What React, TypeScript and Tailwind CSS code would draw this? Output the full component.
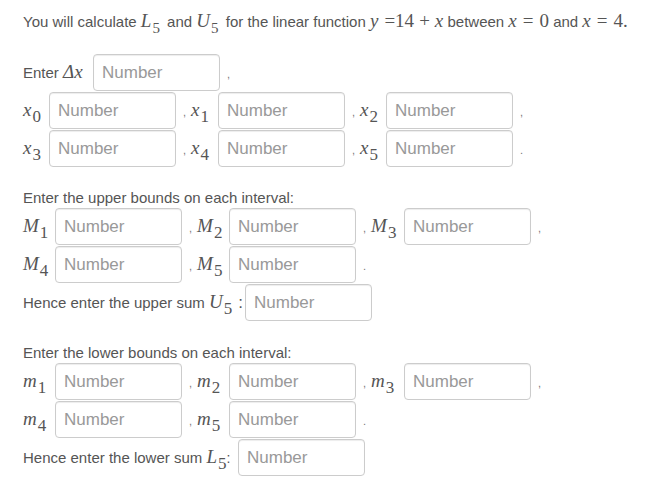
import React from "react";

const mathFont = "font-['Liberation_Serif','DejaVu_Serif',serif]";
const digitFont = "font-['Liberation_Serif','DejaVu_Serif',serif]";

function Num() {
  return (
    <input
      type="text"
      placeholder="Number"
      className="w-[127px] h-[37px] shrink-0 rounded-[4px] border border-[#cccccc] bg-white px-[8px] text-[17px] text-[#555] placeholder:text-[#999] shadow-[inset_0_1px_1px_rgba(0,0,0,0.075)] outline-none font-['Liberation_Sans',Arial,sans-serif]"
    />
  );
}

function Vi({ v }: { v: string }) {
  return <span className={`${mathFont} italic text-[19px] text-[#555]`}>{v}</span>;
}

function Dg({ t, cls = "" }: { t: string; cls?: string }) {
  return <span className={`${digitFont} text-[19px] text-[#555] ${cls}`}>{t}</span>;
}

function V({ v, sub }: { v: string; sub: string }) {
  return (
    <span className="whitespace-nowrap">
      <span className={`${mathFont} italic text-[19px] text-[#555]`}>{v}</span>
      <span className={`relative top-[6px] ml-[1px] ${digitFont} text-[17px] text-[#555]`}>{sub}</span>
    </span>
  );
}

function VS({ v, sub }: { v: string; sub: string }) {
  return (
    <span className="whitespace-nowrap mr-[3px]">
      <span className={`${mathFont} italic text-[19px] text-[#555]`}>{v}</span>
      <span className={`relative top-[6px] ml-[1px] ${digitFont} text-[15px] text-[#555]`}>{sub}</span>
    </span>
  );
}

function Lead({ w, children }: { w: string; children: React.ReactNode }) {
  return <span className={`${w} shrink-0 flex items-baseline`}>{children}</span>;
}

function Sep({ w, v, sub }: { w: string; v: string; sub: string }) {
  return (
    <span className={`${w} shrink-0 flex items-baseline pl-[7px]`}>
      <span className="text-[11px] text-[#777]">,</span>
      <span className="ml-[5px]">
        <V v={v} sub={sub} />
      </span>
    </span>
  );
}

function Tail({ ch }: { ch: string }) {
  return <span className="ml-[7px] text-[11px] text-[#777]">{ch}</span>;
}

function Row({ children }: { children: React.ReactNode }) {
  return <div className="flex h-[37px] items-baseline">{children}</div>;
}

export default function App() {
  return (
    <div className="min-h-[498px] w-[667px] bg-white pl-[23px] pt-[7px] text-[15px] text-[#555] font-['Liberation_Sans',Arial,sans-serif]">
      <div className="flex h-[25px] items-baseline whitespace-pre">
        <span>You will calculate </span>
        <VS v="L" sub="5" />
        <span> and </span>
        <VS v="U" sub="5" />
        <span> for the linear function </span>
        <Vi v="y" />
        <Dg t="=14" cls="ml-[6px]" />
        <Dg t="+" cls="mx-[5px]" />
        <Vi v="x" />
        <span> between </span>
        <Vi v="x" />
        <Dg t="=" cls="mx-[6px]" />
        <Dg t="0" />
        <span> and </span>
        <Vi v="x" />
        <Dg t="=" cls="mx-[6px]" />
        <Dg t="4" />
        <Dg t="." />
      </div>

      <div className="mt-[22px] flex flex-col gap-[1px]">
        <Row>
          <Lead w="w-[70px]">
            <span>Enter&nbsp;</span>
            <Vi v="Δx" />
          </Lead>
          <Num />
          <Tail ch="," />
        </Row>
        <Row>
          <Lead w="w-[26px]">
            <V v="x" sub="0" />
          </Lead>
          <Num />
          <Sep w="w-[42px]" v="x" sub="1" />
          <Num />
          <Sep w="w-[41px]" v="x" sub="2" />
          <Num />
          <Tail ch="," />
        </Row>
        <Row>
          <Lead w="w-[26px]">
            <V v="x" sub="3" />
          </Lead>
          <Num />
          <Sep w="w-[42px]" v="x" sub="4" />
          <Num />
          <Sep w="w-[41px]" v="x" sub="5" />
          <Num />
          <Tail ch="." />
        </Row>
      </div>

      <div className="mt-[21px] h-[20px] leading-[20px]">Enter the upper bounds on each interval:</div>
      <div className="flex flex-col gap-[1px]">
        <Row>
          <Lead w="w-[32px]">
            <V v="M" sub="1" />
          </Lead>
          <Num />
          <Sep w="w-[47px]" v="M" sub="2" />
          <Num />
          <Sep w="w-[48px]" v="M" sub="3" />
          <Num />
          <Tail ch="," />
        </Row>
        <Row>
          <Lead w="w-[32px]">
            <V v="M" sub="4" />
          </Lead>
          <Num />
          <Sep w="w-[47px]" v="M" sub="5" />
          <Num />
          <Tail ch="." />
        </Row>
        <Row>
          <Lead w="w-[222px]">
            <span className="whitespace-pre">Hence enter the upper sum </span>
            <V v="U" sub="5" />
            <span className="ml-[6px] text-[17px]">:</span>
          </Lead>
          <Num />
        </Row>
      </div>

      <div className="mt-[22px] h-[20px] leading-[20px]">Enter the lower bounds on each interval:</div>
      <div className="flex flex-col gap-[1px]">
        <Row>
          <Lead w="w-[32px]">
            <V v="m" sub="1" />
          </Lead>
          <Num />
          <Sep w="w-[47px]" v="m" sub="2" />
          <Num />
          <Sep w="w-[48px]" v="m" sub="3" />
          <Num />
          <Tail ch="," />
        </Row>
        <Row>
          <Lead w="w-[32px]">
            <V v="m" sub="4" />
          </Lead>
          <Num />
          <Sep w="w-[47px]" v="m" sub="5" />
          <Num />
          <Tail ch="." />
        </Row>
        <Row>
          <Lead w="w-[215px]">
            <span className="whitespace-pre">Hence enter the lower sum </span>
            <V v="L" sub="5" />
            <span className="text-[14px]">:</span>
          </Lead>
          <Num />
        </Row>
      </div>
    </div>
  );
}
